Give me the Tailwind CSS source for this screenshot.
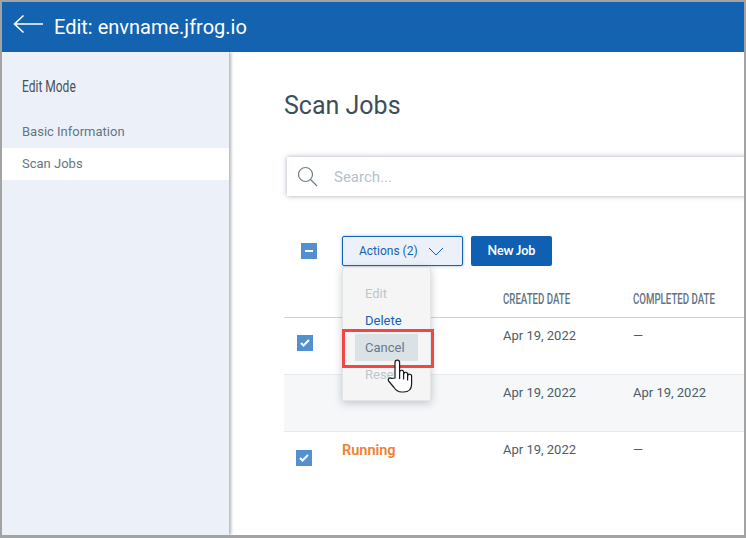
<!DOCTYPE html>
<html lang="en">
<head>
    <meta charset="UTF-8">
    <title>Edit: envname.jfrog.io</title>
    <script src="https://cdn.jsdelivr.net/npm/@tailwindcss/browser@4"></script>
</head>
<body class="w-[746px] h-[538px] overflow-hidden bg-white font-['Roboto',sans-serif]">
<div class="relative w-[746px] h-[538px] overflow-hidden border-2 border-b-[3px] border-[#a3a3a3] flex flex-col">
    <!-- top bar -->
    <header class="h-[50px] shrink-0 bg-[#1463b1] flex items-center pl-[11px] text-white">
        <svg width="31" height="20" viewBox="0 0 31 20" fill="none" stroke="white" stroke-width="1.6" class="mr-[10px] -mt-[6px]"><path d="M1.5 10H30M10.5 1.5L1.5 10l9 8.5"/></svg>
        <span class="text-[20px] leading-none">Edit: envname.jfrog.io</span>
    </header>

    <div class="flex flex-1 min-h-0">
        <!-- sidebar -->
        <aside class="w-[227px] shrink-0 bg-[#ecf1f9] shadow-[2px_0_3px_rgba(80,90,100,0.45)] z-10 pt-[26px]">
            <h2 class="ml-5 text-[16px] leading-[18px] text-[#46525c] origin-left scale-x-[0.75]">Edit Mode</h2>
            <ul class="mt-[20px] text-[13px] text-[#66757f]">
                <li class="h-8 pl-5 flex items-center">Basic Information</li>
                <li class="h-8 pl-5 flex items-center bg-white">Scan Jobs</li>
            </ul>
        </aside>

        <!-- content -->
        <main class="flex-1 min-w-0 relative">
            <h1 class="ml-[55px] mt-[39px] text-[25px] leading-[30px] text-[#3d4e5b]">Scan Jobs</h1>

            <div class="ml-[58px] mt-[36px] w-[500px] h-[39px] bg-white shadow-[0_0_5px_rgba(90,110,125,0.55)] flex items-center pl-[10px]">
                <svg width="21" height="21" viewBox="0 0 21 21" fill="none" stroke="#6f7f8b" stroke-width="1.2"><circle cx="8.5" cy="8.5" r="7"/><path d="M13.5 13.5L20 20"/></svg>
                <span class="ml-[16px] mt-[1px] text-[15px] text-[#b6c2cb]">Search...</span>
            </div>

            <div class="mt-10 h-[30px] flex items-center">
                <span class="ml-[72px] w-4 h-4 bg-[#5390cf] flex items-center justify-center"><span class="w-2 h-[2px] bg-white"></span></span>
                <button class="ml-[25px] w-[121px] h-[30px] rounded-[2px] bg-[#ecf1f9] border border-[#1463b1] shadow-[0_0_3px_rgba(20,99,177,0.5)] text-[12px] text-[#1463b1] flex items-center pl-4">
                    Actions (2)
                    <svg width="16" height="9" viewBox="0 0 16 9" fill="none" stroke="#1463b1" stroke-width="1" class="ml-[10px]"><path d="M1 1l7 7 7-7"/></svg>
                </button>
                <button class="ml-2 w-[81px] h-[30px] rounded-[2px] bg-[#0f5fb3] text-white text-[12.5px] font-bold font-['Lato',sans-serif]">New Job</button>
            </div>

            <!-- table -->
            <div class="ml-[55px] mt-[20px] text-[13px] text-[#4f5c66]">
                <div class="h-[32px] border-b border-[#d0d4d8] pl-[219px] flex items-center pb-[4px] text-[15px] font-medium text-[#5f7383]">
                    <span class="w-[130px] shrink-0 whitespace-nowrap origin-left scale-x-[0.645]">CREATED DATE</span>
                    <span class="whitespace-nowrap origin-left scale-x-[0.645]">COMPLETED DATE</span>
                </div>
                <div class="h-[57px] border-b border-[#e6eaee] flex">
                    <span class="ml-[13px] mt-[17px] w-4 h-4 bg-[#5390cf] flex items-center justify-center">
                        <svg width="10" height="8" viewBox="0 0 10 8" fill="none" stroke="white" stroke-width="2"><path d="M1 4l2.5 2.5L9 1"/></svg>
                    </span>
                    <span class="ml-[190px] mt-[8px] w-[130px]">Apr 19, 2022</span>
                    <span class="mt-[8px]">—</span>
                </div>
                <div class="h-[57px] border-b border-[#e6eaee] bg-[#f5f7f9] flex">
                    <span class="ml-[219px] mt-[8px] w-[130px]">Apr 19, 2022</span>
                    <span class="mt-[8px]">Apr 19, 2022</span>
                </div>
                <div class="h-[57px] flex">
                    <span class="ml-[12px] mt-[18px] w-4 h-4 bg-[#5390cf] flex items-center justify-center">
                        <svg width="10" height="8" viewBox="0 0 10 8" fill="none" stroke="white" stroke-width="2"><path d="M1 4l2.5 2.5L9 1"/></svg>
                    </span>
                    <span class="ml-[30px] mt-[8px] w-[161px] text-[14.5px] font-semibold text-[#f07f2e]">Running</span>
                    <span class="mt-[8px] w-[130px]">Apr 19, 2022</span>
                    <span class="mt-[8px]">—</span>
                </div>
            </div>

            <!-- actions menu -->
            <div class="absolute left-[113px] top-[215px] w-[89px] h-[134px] bg-[#f5f5f5] border border-[#e3e6e8] shadow-[0_2px_8px_rgba(70,80,90,0.3)] pt-[12px] pl-[12px] text-[13px]">
                <div class="h-[27px] pl-[10px] flex items-center text-[#bcc6cd]">Edit</div>
                <div class="h-[27px] pl-[10px] flex items-center text-[#1463b1]">Delete</div>
                <div class="h-[27px] w-[63px] pl-[10px] flex items-center bg-[#dbe2e6] text-[#66798a]">Cancel</div>
                <div class="h-[27px] pl-[10px] flex items-center text-[#bcc6cd]">Reset</div>
            </div>
            <!-- callout -->
            <div class="absolute left-[113px] top-[277px] w-[92px] h-[39px] border-[3px] border-[#f44545]"></div>
            <!-- cursor -->
            <svg class="absolute left-[157px] top-[306px]" width="28" height="36" viewBox="0 0 28 36" fill="white" stroke="#15181c" stroke-width="1.2" stroke-linejoin="round">
                <path d="M9 20V4.5a2.3 2.3 0 0 1 4.6 0V14a2 2 0 0 1 4 0.5V16a2 2 0 0 1 4 0.5V18a2 2 0 0 1 4 0.5V26c0 5-3 8-8 8h-2c-4 0-6-2-8-5l-5-6c-1.4-2 1-4 3-2.5z"/>
                <path d="M13.6 14v7M17.6 14.5v7M21.6 16.5v6" fill="none"/>
            </svg>
        </main>
    </div>
</div>
</body>
</html>
